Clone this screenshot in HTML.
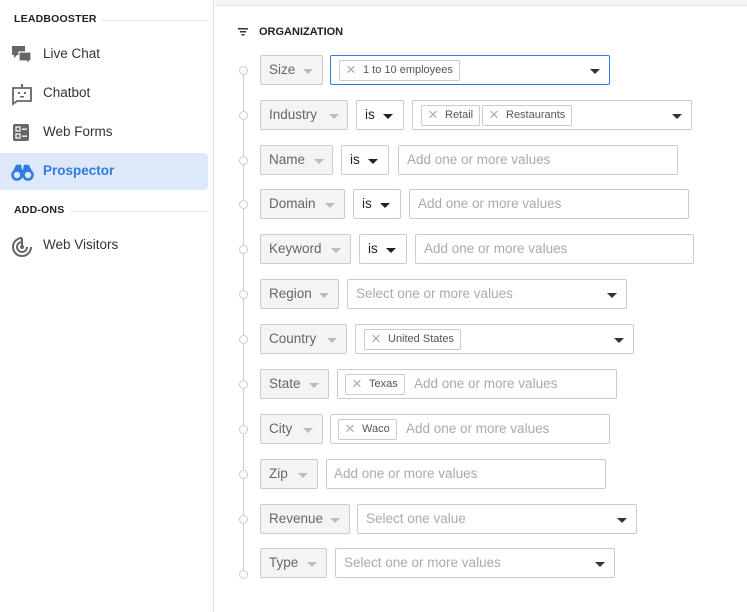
<!DOCTYPE html>
<html><head><meta charset="utf-8"><style>
*{box-sizing:border-box;margin:0;padding:0}
body{width:747px;height:612px;overflow:hidden;background:#fff;font-family:"Liberation Sans",sans-serif;color:#333;position:relative}
.sb{position:absolute;left:0;top:0;width:214px;height:612px;border-right:1px solid #e0e0e0;background:#fff}
.top{position:absolute;left:215px;top:0;right:0;height:6px;background:#f4f4f4;border-bottom:1px solid #e2e2e2}
.hd{position:absolute;left:14px;font-size:10.5px;font-weight:bold;color:#222;letter-spacing:.2px}
.hl{position:absolute;height:1px;background:#e0e0e0}
.it{position:absolute;left:0;width:208px;height:37px;font-size:13.5px;color:#333}
.it span{position:absolute;left:43px;top:10px}
.it svg{position:absolute;left:11px;top:9px}
.act{background:#dde9f8;border-radius:0 4px 4px 0;color:#317ae2}
.a{position:absolute}
.lbl{position:absolute;height:30px;border:1px solid #ccc;background:#f4f4f4;border-radius:2px;font-size:13.5px;color:#666;padding:6px 0 0 8px}
.lbl i,.is i,.inp i{position:absolute;top:13px;width:0;height:0;border-left:5px solid transparent;border-right:5px solid transparent;border-top:5px solid #bbb}
.is{position:absolute;height:30px;border:1px solid #ccc;border-radius:2px;background:#fff;font-size:13.5px;color:#222;padding:6px 0 0 8px}
.is i{border-top-color:#222;right:10px}
.inp{position:absolute;height:30px;border:1px solid #ccc;border-radius:2px;background:#fff;font-size:13.5px;color:#aaa}
.inp i{border-top-color:#333;right:9px}
.ph{position:absolute;top:6px}
.tag{position:absolute;top:4px;height:21px;border:1px solid #ccc;border-radius:2px;font-size:11px;color:#555;padding:3px 6px 0 23px;background:#fff;white-space:nowrap}
.tag:before{content:"\00d7";position:absolute;left:6px;top:-1px;font-size:17px;color:#aaa;font-weight:normal}
.line{position:absolute;left:243px;top:70px;width:1px;height:505px;background:#ccc}
.dot{position:absolute;left:239px;width:9px;height:9px;border:1px solid #ccc;border-radius:50%;background:#fff}
</style></head><body>
<div class="sb">
<div class="hd" style="top:13px">LEADBOOSTER</div><div class="hl" style="left:102px;top:20px;width:106px"></div>
<div class="it" style="top:36px"><svg width="22" height="20" viewBox="0 0 22 20"><path d="M1 1h13v9H6l-3 3v-3H1z" fill="#666"/><path d="M8 7h12v9h-2v3l-3-3H8z" fill="#666" stroke="#fff" stroke-width="1.2"/></svg><span>Live Chat</span></div>
<div class="it" style="top:75px"><svg width="22" height="22" viewBox="0 0 22 22"><rect x="10" y="0" width="2" height="3" fill="#666"/><path d="M2 4h18v13H6l-4 3z" fill="none" stroke="#666" stroke-width="1.8"/><rect x="7" y="8" width="2" height="2" fill="#666"/><rect x="13" y="8" width="2" height="2" fill="#666"/><rect x="9" y="12" width="4" height="1.5" fill="#666"/></svg><span>Chatbot</span></div>
<div class="it" style="top:114px"><svg width="22" height="20" viewBox="0 0 22 20"><rect x="2" y="1" width="16" height="17" rx="2" fill="#666"/><rect x="5" y="4" width="4" height="4" fill="none" stroke="#fff" stroke-width="1.2"/><rect x="5" y="11" width="4" height="4" fill="none" stroke="#fff" stroke-width="1.2"/><rect x="11" y="5.5" width="5" height="1.3" fill="#fff"/><rect x="11" y="12.5" width="5" height="1.3" fill="#fff"/></svg><span>Web Forms</span></div>
<div class="it act" style="top:153px"><svg width="24" height="20" viewBox="0 0 24 20"><circle cx="6" cy="13" r="4.5" fill="none" stroke="#317ae2" stroke-width="2.6"/><circle cx="17" cy="13" r="4.5" fill="none" stroke="#317ae2" stroke-width="2.6"/><path d="M3 10l3-6h3l1 5M20 10l-3-6h-3l-1 5M10 9h3" stroke="#317ae2" stroke-width="2.6" fill="#317ae2"/></svg><span style="font-weight:bold">Prospector</span></div>
<div class="hd" style="top:204px">ADD-ONS</div><div class="hl" style="left:71px;top:211px;width:137px"></div>
<div class="it" style="top:227px"><svg width="22" height="22" viewBox="0 0 22 22"><path d="M11 2a9 9 0 1 0 9 9" fill="none" stroke="#666" stroke-width="2"/><path d="M11 6a5 5 0 1 0 5 5" fill="none" stroke="#666" stroke-width="2"/><circle cx="11" cy="11" r="2" fill="#666"/><path d="M11 11V2" stroke="#666" stroke-width="2"/></svg><span>Web Visitors</span></div>
</div>
<div class="top"></div>
<svg class="a" style="left:238px;top:28px" width="10" height="8"><rect x="0" y="0" width="10" height="1.5" fill="#333"/><rect x="2" y="3" width="6" height="1.5" fill="#333"/><rect x="3.5" y="6" width="3" height="1.5" fill="#333"/></svg>
<div class="a" style="left:259px;top:26px;font-size:11px;font-weight:bold;color:#222">ORGANIZATION</div>
<div class="line"></div>
<div class="dot" style="top:66px"></div><div class="dot" style="top:111px"></div><div class="dot" style="top:156px"></div><div class="dot" style="top:200px"></div><div class="dot" style="top:245px"></div><div class="dot" style="top:290px"></div><div class="dot" style="top:335px"></div><div class="dot" style="top:380px"></div><div class="dot" style="top:425px"></div><div class="dot" style="top:470px"></div><div class="dot" style="top:515px"></div><div class="dot" style="top:570px"></div>

<div class="lbl" style="left:260px;top:55px;width:63px">Size<i style="left:42px"></i></div>
<div class="inp" style="left:330px;top:55px;width:280px;border-color:#317ae2"><div class="tag" style="left:8px">1 to 10 employees</div><i></i></div>

<div class="lbl" style="left:260px;top:100px;width:88px">Industry<i style="left:68px"></i></div>
<div class="is" style="left:356px;top:100px;width:48px">is<i></i></div>
<div class="inp" style="left:412px;top:100px;width:280px"><div class="tag" style="left:8px">Retail</div><div class="tag" style="left:69px">Restaurants</div><i></i></div>

<div class="lbl" style="left:260px;top:145px;width:73px">Name<i style="left:53px"></i></div>
<div class="is" style="left:341px;top:145px;width:48px">is<i></i></div>
<div class="inp" style="left:398px;top:145px;width:280px"><span class="ph" style="left:8px">Add one or more values</span></div>

<div class="lbl" style="left:260px;top:189px;width:85px">Domain<i style="left:64px"></i></div>
<div class="is" style="left:353px;top:189px;width:48px">is<i></i></div>
<div class="inp" style="left:409px;top:189px;width:280px"><span class="ph" style="left:8px">Add one or more values</span></div>

<div class="lbl" style="left:260px;top:234px;width:91px">Keyword<i style="left:70px"></i></div>
<div class="is" style="left:359px;top:234px;width:48px">is<i></i></div>
<div class="inp" style="left:415px;top:234px;width:279px"><span class="ph" style="left:8px">Add one or more values</span></div>

<div class="lbl" style="left:260px;top:279px;width:79px">Region<i style="left:58px"></i></div>
<div class="inp" style="left:347px;top:279px;width:280px"><span class="ph" style="left:8px">Select one or more values</span><i></i></div>

<div class="lbl" style="left:260px;top:324px;width:87px">Country<i style="left:66px"></i></div>
<div class="inp" style="left:355px;top:324px;width:279px"><div class="tag" style="left:8px">United States</div><i></i></div>

<div class="lbl" style="left:260px;top:369px;width:69px">State<i style="left:48px"></i></div>
<div class="inp" style="left:337px;top:369px;width:280px"><div class="tag" style="left:7px">Texas</div><span class="ph" style="left:76px">Add one or more values</span></div>

<div class="lbl" style="left:260px;top:414px;width:63px">City<i style="left:42px"></i></div>
<div class="inp" style="left:330px;top:414px;width:280px"><div class="tag" style="left:7px">Waco</div><span class="ph" style="left:75px">Add one or more values</span></div>

<div class="lbl" style="left:260px;top:459px;width:58px">Zip<i style="left:37px"></i></div>
<div class="inp" style="left:326px;top:459px;width:280px"><span class="ph" style="left:7px">Add one or more values</span></div>

<div class="lbl" style="left:260px;top:504px;width:90px">Revenue<i style="left:69px"></i></div>
<div class="inp" style="left:357px;top:504px;width:280px"><span class="ph" style="left:8px">Select one value</span><i></i></div>

<div class="lbl" style="left:260px;top:548px;width:67px">Type<i style="left:46px"></i></div>
<div class="inp" style="left:335px;top:548px;width:280px"><span class="ph" style="left:8px">Select one or more values</span><i></i></div>
</body></html>
